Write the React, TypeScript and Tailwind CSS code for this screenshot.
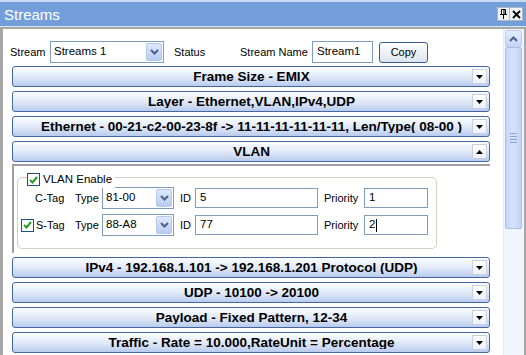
import React from 'react';

const FONT = { fontFamily: '"Liberation Sans", Arial, sans-serif' };

function DownTri() {
  return (
    <svg width="7" height="4" viewBox="0 0 7 4">
      <path d="M0 0h7L3.5 4z" fill="#000" />
    </svg>
  );
}

function UpTri() {
  return (
    <svg width="7" height="4" viewBox="0 0 7 4">
      <path d="M0 4h7L3.5 0z" fill="#000" />
    </svg>
  );
}

function Chevron() {
  return (
    <svg width="9" height="6" viewBox="0 0 9 6">
      <path d="M1 1l3.5 3.5L8 1" stroke="#4d6185" strokeWidth="2" fill="none" />
    </svg>
  );
}

function Section({ title, open = false }: { title: string; open?: boolean }) {
  return (
    <div className="h-[21px] shrink-0 rounded-[3px] border border-[#46669f] bg-gradient-to-b from-[#fbfdff] via-[#e2eaf8] to-[#b8cbee] flex items-center">
      <span className="flex-1 pl-[18px] text-center font-bold text-[13.5px] leading-none text-black whitespace-nowrap overflow-hidden">
        {title}
      </span>
      <span className="w-[15px] h-[15px] mr-[2px] border border-[#c6d0e2] bg-gradient-to-b from-white to-[#eef1f7] flex items-center justify-center">
        {open ? <UpTri /> : <DownTri />}
      </span>
    </div>
  );
}

function Combo({ value, w }: { value: string; w: string }) {
  return (
    <div className={`${w} h-[22px] shrink-0 border border-[#7f9db9] bg-white flex items-center`}>
      <span className="flex-1 pl-[3px] text-[11.5px] leading-none">{value}</span>
      <span className="w-[16px] h-[18px] mr-[1px] rounded-[2px] border border-[#b5c7ec] bg-gradient-to-b from-[#dfe8fb] to-[#b8cbf3] flex items-center justify-center">
        <Chevron />
      </span>
    </div>
  );
}

function Check() {
  return (
    <span className="w-[13px] h-[13px] shrink-0 border border-[#1c5180] bg-white flex items-center justify-center">
      <svg width="9" height="8" viewBox="0 0 9 8">
        <path d="M1 4l2.5 2.5L8 1" stroke="#21a121" strokeWidth="2" fill="none" />
      </svg>
    </span>
  );
}

function Field({ value, w, cursor = false }: { value: string; w: string; cursor?: boolean }) {
  return (
    <div className={`${w} h-[20px] shrink-0 border border-[#7f9db9] bg-white flex items-center pl-[4px] text-[11.5px] leading-none`}>
      {value}
      {cursor && <span className="w-px h-[13px] bg-black ml-px" />}
    </div>
  );
}

export default function App() {
  return (
    <div className="w-[526px] h-[355px] overflow-hidden bg-white flex flex-col text-black" style={FONT}>
      {/* title bar */}
      <div className="h-[27px] shrink-0 bg-[#729fda] border-t-2 border-[#c9daf2] border-b border-b-[#dce7f6] flex items-center pl-[4px] pr-[3px]">
        <span className="flex-1 text-white text-[15px] leading-none">Streams</span>
        <span className="w-[13px] h-[14px] bg-[#eef0f4] border border-[#b0b8c8] flex items-center justify-center">
          <svg width="7" height="10" viewBox="0 0 7 10">
            <path d="M1.5 0.5h4v5h-4zM0 5.5h7M3.5 5.5v4.5" stroke="#000" strokeWidth="1" fill="none" />
            <path d="M4 1v4.5" stroke="#000" strokeWidth="1" />
          </svg>
        </span>
        <span className="w-[13px] h-[14px] bg-[#eef0f4] border border-[#b0b8c8] border-l-0 flex items-center justify-center">
          <svg width="9" height="9" viewBox="0 0 9 9">
            <path d="M1 1l7 7M8 1L1 8" stroke="#000" strokeWidth="1.8" />
          </svg>
        </span>
      </div>

      <div className="flex-1 flex min-h-0 border-t-2 border-[#a7a7a7]">
        {/* main content */}
        <div className="flex-1 border-l-[3px] border-[#a7a7a7] pl-[7px] pr-[13px] flex flex-col">
          <div className="h-[36px] mt-[5px] flex items-center text-[11px] shrink-0 whitespace-nowrap">
            <span className="w-[40px] shrink-0">Stream</span>
            <Combo value="Streams 1" w="w-[114px]" />
            <span className="ml-[10px] w-[66px] shrink-0">Status</span>
            <span className="w-[72px] shrink-0">Stream Name</span>
            <Field value="Stream1" w="w-[61px] h-[22px]" />
            <button className="ml-[6px] w-[49px] h-[21px] shrink-0 rounded-[3px] border border-[#3c5a8c] bg-gradient-to-b from-white to-[#dde3ee] text-[11px]">
              Copy
            </button>
          </div>

          <div className="flex flex-col gap-[4px] mt-[-4px] ml-[2px]">
            <Section title="Frame Size - EMIX" />
            <Section title="Layer - Ethernet,VLAN,IPv4,UDP" />
            <Section title="Ethernet - 00-21-c2-00-23-8f -> 11-11-11-11-11-11, Len/Type( 08-00 )" />
            <Section title="VLAN" open />

            {/* VLAN panel */}
            <div className="h-[89px] mt-[-2px] shrink-0 border-l-2 border-t-2 border-[#a0a0a0] pl-[3px] pr-[53px] pt-[11px]">
              <div className="relative h-[72px] rounded-[5px] border border-[#d4d0c8] text-[11px] whitespace-nowrap">
                <div className="absolute left-[9px] top-[-7px] bg-white flex items-center gap-[3px] pr-[3px] text-[11.5px]">
                  <Check />
                  <span>VLAN Enable</span>
                </div>
                <div className="flex flex-col gap-[5px] pt-[9px]">
                  <div className="flex items-center">
                    <span className="w-[57px] shrink-0 pl-[17px]">C-Tag</span>
                    <span className="w-[27px] shrink-0">Type</span>
                    <Combo value="81-00" w="w-[72px]" />
                    <span className="ml-[6px] w-[15px] shrink-0">ID</span>
                    <Field value="5" w="w-[123px]" />
                    <span className="ml-[6px] w-[40px] shrink-0">Priority</span>
                    <Field value="1" w="w-[64px]" />
                  </div>
                  <div className="flex items-center">
                    <span className="w-[57px] shrink-0 pl-[3px] flex items-center gap-[2px]">
                      <Check />
                      S-Tag
                    </span>
                    <span className="w-[27px] shrink-0">Type</span>
                    <Combo value="88-A8" w="w-[72px]" />
                    <span className="ml-[6px] w-[15px] shrink-0">ID</span>
                    <Field value="77" w="w-[123px]" />
                    <span className="ml-[6px] w-[40px] shrink-0">Priority</span>
                    <Field value="2" w="w-[64px]" cursor />
                  </div>
                </div>
              </div>
            </div>

            <Section title="IPv4 - 192.168.1.101 -> 192.168.1.201 Protocol (UDP)" />
            <Section title="UDP - 10100 -> 20100" />
            <Section title="Payload - Fixed Pattern, 12-34" />
            <Section title="Traffic - Rate = 10.000,RateUnit = Percentage" />
          </div>
        </div>

        {/* scrollbar */}
        <div className="w-[21px] shrink-0 bg-[#f1f5fd] border-l border-[#e3e9f5] pl-px pr-[2px] pt-px flex flex-col">
          <div className="h-[17px] rounded-[2px] border border-[#bccbee] bg-gradient-to-b from-[#e4ecfd] to-[#c6d5f7] flex items-center justify-center">
            <svg width="9" height="6" viewBox="0 0 9 6">
              <path d="M1 5l3.5-3.5L8 5" stroke="#4d6185" strokeWidth="2" fill="none" />
            </svg>
          </div>
          <div className="h-[182px] rounded-[2px] border border-[#aebfe6] bg-gradient-to-r from-[#c8d7f8] via-[#d6e2fb] to-[#c3d3f6] flex flex-col items-center justify-center gap-[2px]">
            <span className="w-[7px] h-px bg-[#8da3d0]" />
            <span className="w-[7px] h-px bg-[#8da3d0]" />
            <span className="w-[7px] h-px bg-[#8da3d0]" />
            <span className="w-[7px] h-px bg-[#8da3d0]" />
          </div>
        </div>
        <div className="w-[2px] bg-[#a7a7a7]" />
      </div>
    </div>
  );
}
